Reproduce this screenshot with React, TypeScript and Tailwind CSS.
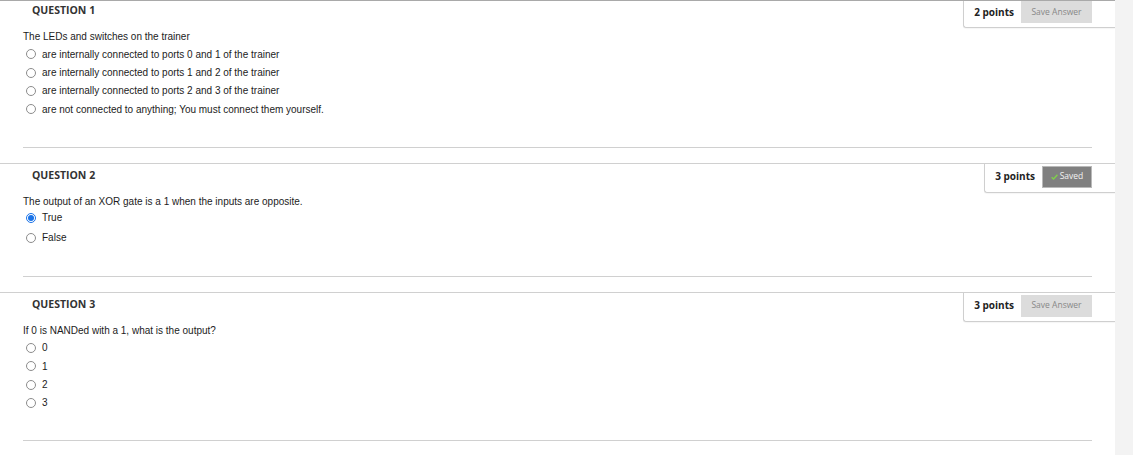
import React from 'react';

interface Question {
  num: number;
  points: number;
  saved: boolean;
  text: string;
  options: string[];
  checked?: number;
  rowClass: string;
  listClass: string;
}

const questions: Question[] = [
  {
    num: 1,
    points: 2,
    saved: false,
    text: 'The LEDs and switches on the trainer',
    options: [
      'are internally connected to ports 0 and 1 of the trainer',
      'are internally connected to ports 1 and 2 of the trainer',
      'are internally connected to ports 2 and 3 of the trainer',
      'are not connected to anything; You must connect them yourself.',
    ],
    rowClass: 'h-[18.4px]',
    listClass: 'mt-[1px] mb-[28px]',
  },
  {
    num: 2,
    points: 3,
    saved: true,
    text: 'The output of an XOR gate is a 1 when the inputs are opposite.',
    options: ['True', 'False'],
    checked: 0,
    rowClass: 'h-[20px]',
    listClass: 'mt-[-1px] mb-[28px]',
  },
  {
    num: 3,
    points: 3,
    saved: false,
    text: 'If 0 is NANDed with a 1, what is the output?',
    options: ['0', '1', '2', '3'],
    rowClass: 'h-[18.4px]',
    listClass: 'mt-[1px] mb-[28px]',
  },
];

function Radio({ on }: { on: boolean }) {
  if (on) {
    return <span className="flex h-[10px] w-[10px] shrink-0 items-center justify-center rounded-full border border-[#1a73e8] bg-white">
      <span className="h-[6px] w-[6px] rounded-full bg-[#1a73e8]" />
    </span>;
  }
  return <span className="h-[10px] w-[10px] shrink-0 rounded-full border border-[#8c8c8c] bg-white" />;
}

function PointsBox({ points, saved }: { points: number; saved: boolean }) {
  return <div className="flex items-center gap-[7px] rounded-bl-[3px] border-b border-l border-[#cfcfcf] pb-[4px] pl-[10px] pr-[23px] pt-[2px] shadow-[0_1px_1px_rgba(0,0,0,0.04)]">
    <span className="text-[10px] font-bold text-[#222]">{points} points</span>
    {saved
      ? <span className="flex h-[22px] w-[50px] items-center justify-center gap-[2px] border border-[#b9b9b9] bg-[#808080] text-[8.5px] text-[#f2f2f2]">
          <svg width="7" height="6" viewBox="0 0 7 6"><path d="M0.6 3.2 L2.6 5 L6.4 0.8" fill="none" stroke="#7fd04b" strokeWidth="1.4" /></svg>
          Saved
        </span>
      : <span className="flex h-[22px] w-[71px] items-center justify-center bg-[#dcdcdc] text-[8.5px] text-[#888]">Save Answer</span>}
  </div>;
}

function QuestionBlock({ q }: { q: Question }) {
  return <section className="border-t border-[#d0d0d0]">
    <div className="flex items-start justify-between">
      <h2 className="pl-[32px] pt-[4px] text-[10.5px] font-bold leading-[14px] text-[#333]">QUESTION {q.num}</h2>
      <PointsBox points={q.points} saved={q.saved} />
    </div>
    <div className="px-[23px] pt-[2px] font-['Liberation_Sans',Arial,sans-serif] text-[10px] text-[#1c1c1c]">
      <p className="leading-[14px]">{q.text}</p>
      <ul className={q.listClass}>
        {q.options.map((opt, i) => <li key={opt} className={`flex items-center gap-[6px] pl-[3px] ${q.rowClass}`}>
          <Radio on={q.checked === i} />
          <span>{opt}</span>
        </li>)}
      </ul>
      <div className="border-b border-[#d0d0d0]" />
    </div>
    <div className="h-[15px]" />
  </section>;
}

export default function App() {
  return <div className="flex h-[455px] w-full bg-white font-['Open_Sans',sans-serif]">
    <main className="w-[1115px] shrink-0 overflow-hidden border-t border-[#a9a9a9]">
      <div className="-mt-[3px]">
        {questions.map(q => <QuestionBlock key={q.num} q={q} />)}
      </div>
    </main>
    <div className="flex-1 bg-[#f3f3f3]" />
  </div>;
}
